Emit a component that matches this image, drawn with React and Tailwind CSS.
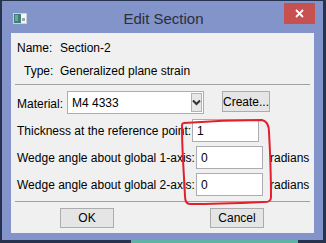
import React from 'react';

function AppIcon() {
  return (
    <svg width="14" height="11" viewBox="0 0 14 11" aria-hidden>
      <rect x="0" y="0" width="14" height="11" fill="#c9d0d6" />
      <rect x="1" y="1" width="7" height="9" fill="#3f7f74" />
      <rect x="2" y="2" width="3" height="6" fill="#6aa79a" />
      <rect x="8" y="1" width="5" height="9" fill="#f4f6f7" />
      <rect x="9" y="5" width="3" height="3" fill="#9aa5ad" />
    </svg>
  );
}

function ChevronIcon() {
  return (
    <svg width="9" height="7" viewBox="0 0 9 7" aria-hidden>
      <path d="M1 1.5l3.5 3.5 3.5-3.5" fill="none" stroke="#333" strokeWidth="2" />
    </svg>
  );
}

function TextBox({ value, width = 'w-[67px]' }) {
  return (
    <div className={`flex h-[23px] ${width} items-center border border-[#abadb3] bg-white pl-[4px] text-[12px]`}>
      {value}
    </div>
  );
}

function Button({ children, width = 'w-[54px]', height = 'h-[20px]' }) {
  return (
    <button
      type="button"
      className={`flex ${height} ${width} items-center justify-center border border-[#acacac] bg-[#e5e5e5] text-[12px] text-black`}
    >
      {children}
    </button>
  );
}

const EditSection = () => {
  return (
    <div
      className="relative flex h-[243px] w-[326px] flex-col overflow-hidden bg-[#27324f] text-black"
      style={{ fontFamily: '"Liberation Sans", Arial, sans-serif' }}
    >
      <div className="ml-[2px] mt-[1px] flex h-[239px] w-[321px] flex-col bg-[#8294ca]">
        {/* title bar */}
        <div className="flex h-[32px] items-start">
          <div className="ml-[11px] mt-[12px]">
            <AppIcon />
          </div>
          <div className="mt-[7px] flex-1 pl-[16px] text-center text-[15px] text-[#2a2f3c]">Edit Section</div>
          <div className="mr-[8px] mt-[2px] flex h-[21px] w-[31px] items-center justify-center bg-[#c75050]">
            <svg width="9" height="9" viewBox="0 0 9 9" aria-hidden>
              <path d="M1 1l7 7M8 1l-7 7" stroke="#fff" strokeWidth="1.8" />
            </svg>
          </div>
        </div>

        {/* client area */}
        <div className="ml-[9px] flex h-[200px] w-[303px] flex-col bg-[#f0f0f0] text-[12px]">
          <div className="mt-[4px] flex h-[22px] items-center">
            <span className="w-[40px] pl-[6px]">Name:</span>
            <span className="ml-[9px]">Section-2</span>
          </div>
          <div className="flex h-[23px] items-center">
            <span className="w-[40px] pl-[13px]">Type:</span>
            <span className="ml-[9px]">Generalized plane strain</span>
          </div>
          <div className="mx-[4px] mt-[2px] h-px bg-[#a0a0a0]" />

          <div className="mt-[6px] flex h-[23px] items-start pl-[6px]">
            <span className="mt-[4px] w-[50px]">Material:</span>
            <div className="flex h-[23px] w-[137px] items-center border border-[#abadb3] bg-white pl-[4px]">
              <span className="flex-1">M4 4333</span>
              <div className="mr-[1px] flex h-[19px] w-[11px] items-center justify-center border border-[#b3b3b3] bg-[#e8e8e8]">
                <ChevronIcon />
              </div>
            </div>
            <div className="ml-[18px]">
              <Button width="w-[48px]" height="h-[21px]">Create...</Button>
            </div>
          </div>

          <div className="mt-[5px] flex h-[23px] items-center pl-[6px]">
            <span className="w-[175px]">Thickness at the reference point:</span>
            <TextBox value="1" />
          </div>
          <div className="mt-[4px] flex h-[23px] items-center pl-[6px]">
            <span className="w-[179px]">Wedge angle about global 1-axis:</span>
            <TextBox value="0" />
            <span className="ml-[7px]">radians</span>
          </div>
          <div className="mt-[4px] flex h-[23px] items-center pl-[6px]">
            <span className="w-[179px]">Wedge angle about global 2-axis:</span>
            <TextBox value="0" />
            <span className="ml-[7px]">radians</span>
          </div>

          <div className="mx-[4px] mt-[5px] h-px bg-[#a0a0a0]" />
          <div className="mt-[6px] flex pl-[49px]">
            <Button>OK</Button>
            <div className="ml-[96px]">
              <Button>Cancel</Button>
            </div>
          </div>
        </div>
      </div>

      {/* taskbar strip peeking below the window */}
      <div className="flex h-[3px] pl-[131px]">
        <div className="h-[3px] w-[167px] bg-[#5fb3a5]" />
      </div>

      {/* red freehand annotation */}
      <svg className="pointer-events-none absolute left-0 top-0" width="326" height="243" aria-hidden>
        <path
          d="M184 123 C210 121 240 120 262 120 C267 121 269 125 269 132 C270 150 271 175 271 197 C271 201 269 202 264 202 C240 203 210 204 190 204 C186 204 185 201 185 196 C184 175 182 150 182 128 C182 124 182 123 184 123 Z"
          fill="none"
          stroke="#e2202c"
          strokeWidth="2"
        />
      </svg>
    </div>
  );
};

export default function App() {
  return <EditSection />;
}
